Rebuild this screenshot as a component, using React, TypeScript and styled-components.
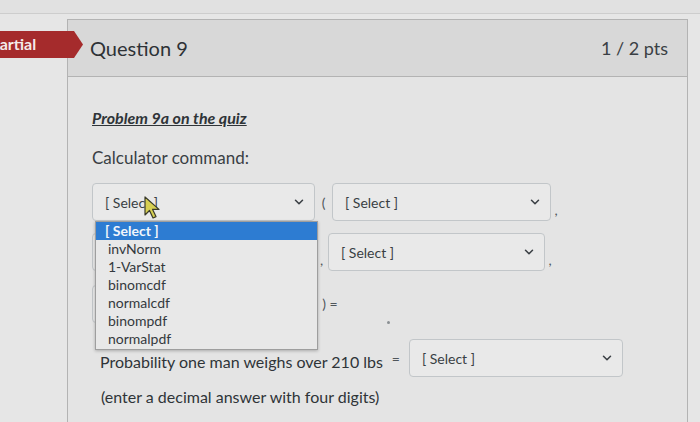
import {FC} from "react";
import styled, {createGlobalStyle} from "styled-components";
import {ChevronDown} from "lucide-react";

const options = ["invNorm", "1-VarStat", "binomcdf", "normalcdf", "binompdf", "normalpdf"];

const GlobalStyle = createGlobalStyle`
  html, body {
    margin: 0;
    padding: 0;
    background: #e6e6e6;
    overflow: hidden;
  }
  body {
    font-family: Lato, "Open Sans", sans-serif;
    color: #333a3f;
  }
`;

interface SelectProps {
  width: number;
  open?: boolean;
}

/**
 * canvas style select box, optionally with its list open
 */
const Select: FC<SelectProps> = ({width, open}) => {
  return (
    <SelectWrapper $width={width}>
      <span>[ Select ]</span>
      <ChevronDown size={14} strokeWidth={2.6} />
      {open && (
        <>
          <List>
            <ListItem $active>[ Select ]</ListItem>
            {options.map((o) => (
              <ListItem key={o}>{o}</ListItem>
            ))}
          </List>
          <Cursor width="18" height="24" viewBox="0 0 18 24">
            <path d="M1 1 L1 19 L5.5 14.5 L9 22 L12 20.6 L8.6 13.4 L15 13.4 Z" fill="#d6cf52" stroke="#3b3b2a" strokeWidth="1.2" strokeLinejoin="round" />
          </Cursor>
        </>
      )}
    </SelectWrapper>
  );
};

export default function App() {
  return (
    <Page>
      <GlobalStyle />
      <TopStrip />
      <Card>
        <Flag>Partial</Flag>
        <Header>
          <Title>Question 9</Title>
          <Points>1 / 2 pts</Points>
        </Header>
        <Body>
          <Problem>Problem 9a on the quiz</Problem>
          <Label>Calculator command:</Label>
          <Rows>
            <Row>
              <Select width={223} open />
              <Punct $w={17}>(</Punct>
              <Select width={219} />
              <Punct $w={10} $low>,</Punct>
            </Row>
            <Row>
              {/* select hidden under the open list */}
              <Covered $width={223} />
              <Punct $w={13} $low>,</Punct>
              <Select width={217} />
              <Punct $w={10} $low>,</Punct>
            </Row>
            <Row>
              <Covered $width={223} />
              <Punct $w={30}>) =</Punct>
              <Blank />
            </Row>
            <Row $indent={8} $top={3}>
              <Text>Probability one man weighs over 210 lbs</Text>
              <Punct $w={26}>=</Punct>
              <Select width={214} />
            </Row>
          </Rows>
          <Note>(enter a decimal answer with four digits)</Note>
        </Body>
      </Card>
    </Page>
  );
}

//css-style
const Page = styled.div`
  width: 700px;
  height: 422px;
  overflow: hidden;
  position: relative;
`;

const TopStrip = styled.div`
  height: 13px;
  border-bottom: 1px solid #cdcdcd;
  background: #e1e1e1;
`;

const Card = styled.div`
  position: relative;
  margin: 5px 0 0 67px;
  width: 619px;
  height: 420px;
  border: 1px solid #b3b3b3;
  border-bottom: none;
  background: #e4e4e4;
`;

const Flag = styled.div`
  position: absolute;
  left: -79px;
  top: 11px;
  width: 94px;
  height: 27px;
  padding-left: 1px;
  box-sizing: border-box;
  background: #a52b2c;
  clip-path: polygon(0 0, calc(100% - 9px) 0, 100% 50%, calc(100% - 9px) 100%, 0 100%);
  color: #f4eaea;
  font-weight: 700;
  font-size: 16px;
  line-height: 26px;
`;

const Header = styled.div`
  display: flex;
  align-items: center;
  justify-content: space-between;
  height: 56px;
  padding: 0 19px 0 22px;
  background: #d8d8d8;
  border-bottom: 1px solid #b3b3b3;
`;

const Title = styled.div`
  font-size: 20px;
  color: #2e3236;
`;

const Points = styled.div`
  font-size: 18px;
  color: #3a3f44;
`;

const Body = styled.div`
  padding: 31px 0 0 24px;
`;

const Problem = styled.div`
  font-size: 16px;
  line-height: 20px;
  font-weight: 700;
  font-style: italic;
  text-decoration: underline;
  color: #2f3438;
`;

const Label = styled.div`
  margin-top: 19px;
  font-size: 17px;
  line-height: 22px;
  color: #3a3f44;
`;

const Rows = styled.div`
  display: flex;
  flex-direction: column;
  gap: 12px;
  margin-top: 14px;
`;

const Row = styled.div<{$indent?: number; $top?: number}>`
  display: flex;
  align-items: center;
  padding-left: ${(p) => p.$indent ?? 0}px;
  margin-top: ${(p) => p.$top ?? 0}px;
`;

const SelectWrapper = styled.div<{$width: number}>`
  position: relative;
  display: flex;
  align-items: center;
  justify-content: space-between;
  box-sizing: border-box;
  width: ${(p) => p.$width}px;
  height: 38px;
  padding: 0 8px 0 12px;
  border: 1px solid #c2c6c9;
  border-radius: 4px;
  background: #e9e9e9;
  font-size: 14px;
  color: #3a3f44;
  svg {
    color: #3a3f44;
  }
`;

const Covered = styled.div<{$width: number}>`
  box-sizing: border-box;
  width: ${(p) => p.$width}px;
  height: 38px;
  border: 1px solid #c2c6c9;
  border-radius: 4px;
  background: #e9e9e9;
`;

const List = styled.div`
  position: absolute;
  left: 2px;
  top: 37px;
  width: 221px;
  z-index: 2;
  background: #e8e8e8;
  border: 1px solid #9e9e9e;
  box-shadow: 0 1px 3px rgba(0, 0, 0, 0.25);
  padding-bottom: 1px;
`;

const ListItem = styled.div<{$active?: boolean}>`
  height: 18px;
  line-height: 18px;
  padding-left: ${(p) => (p.$active ? 9 : 12)}px;
  font-size: 14px;
  background: ${(p) => (p.$active ? "#2d7cd2" : "transparent")};
  color: ${(p) => (p.$active ? "#f2f6fb" : "#34393d")};
  font-weight: ${(p) => (p.$active ? 700 : 400)};
`;

const Cursor = styled.svg`
  position: absolute;
  left: 51px;
  top: 12px;
  z-index: 3;
`;

const Punct = styled.span<{$w: number; $low?: boolean}>`
  width: ${(p) => p.$w}px;
  text-align: center;
  font-size: 14px;
  color: #50565b;
  padding-top: ${(p) => (p.$low ? 14 : 0)}px;
`;

const Blank = styled.span`
  width: 3px;
  height: 3px;
  margin: 38px 0 0 42px;
  border-radius: 50%;
  background: #8a8f93;
`;

const Text = styled.span`
  font-size: 16px;
  color: #2f3438;
  padding-top: 6px;
`;

const Note = styled.div`
  margin-top: 9px;
  padding-left: 9px;
  font-size: 16px;
  line-height: 22px;
  color: #2f3438;
`;
